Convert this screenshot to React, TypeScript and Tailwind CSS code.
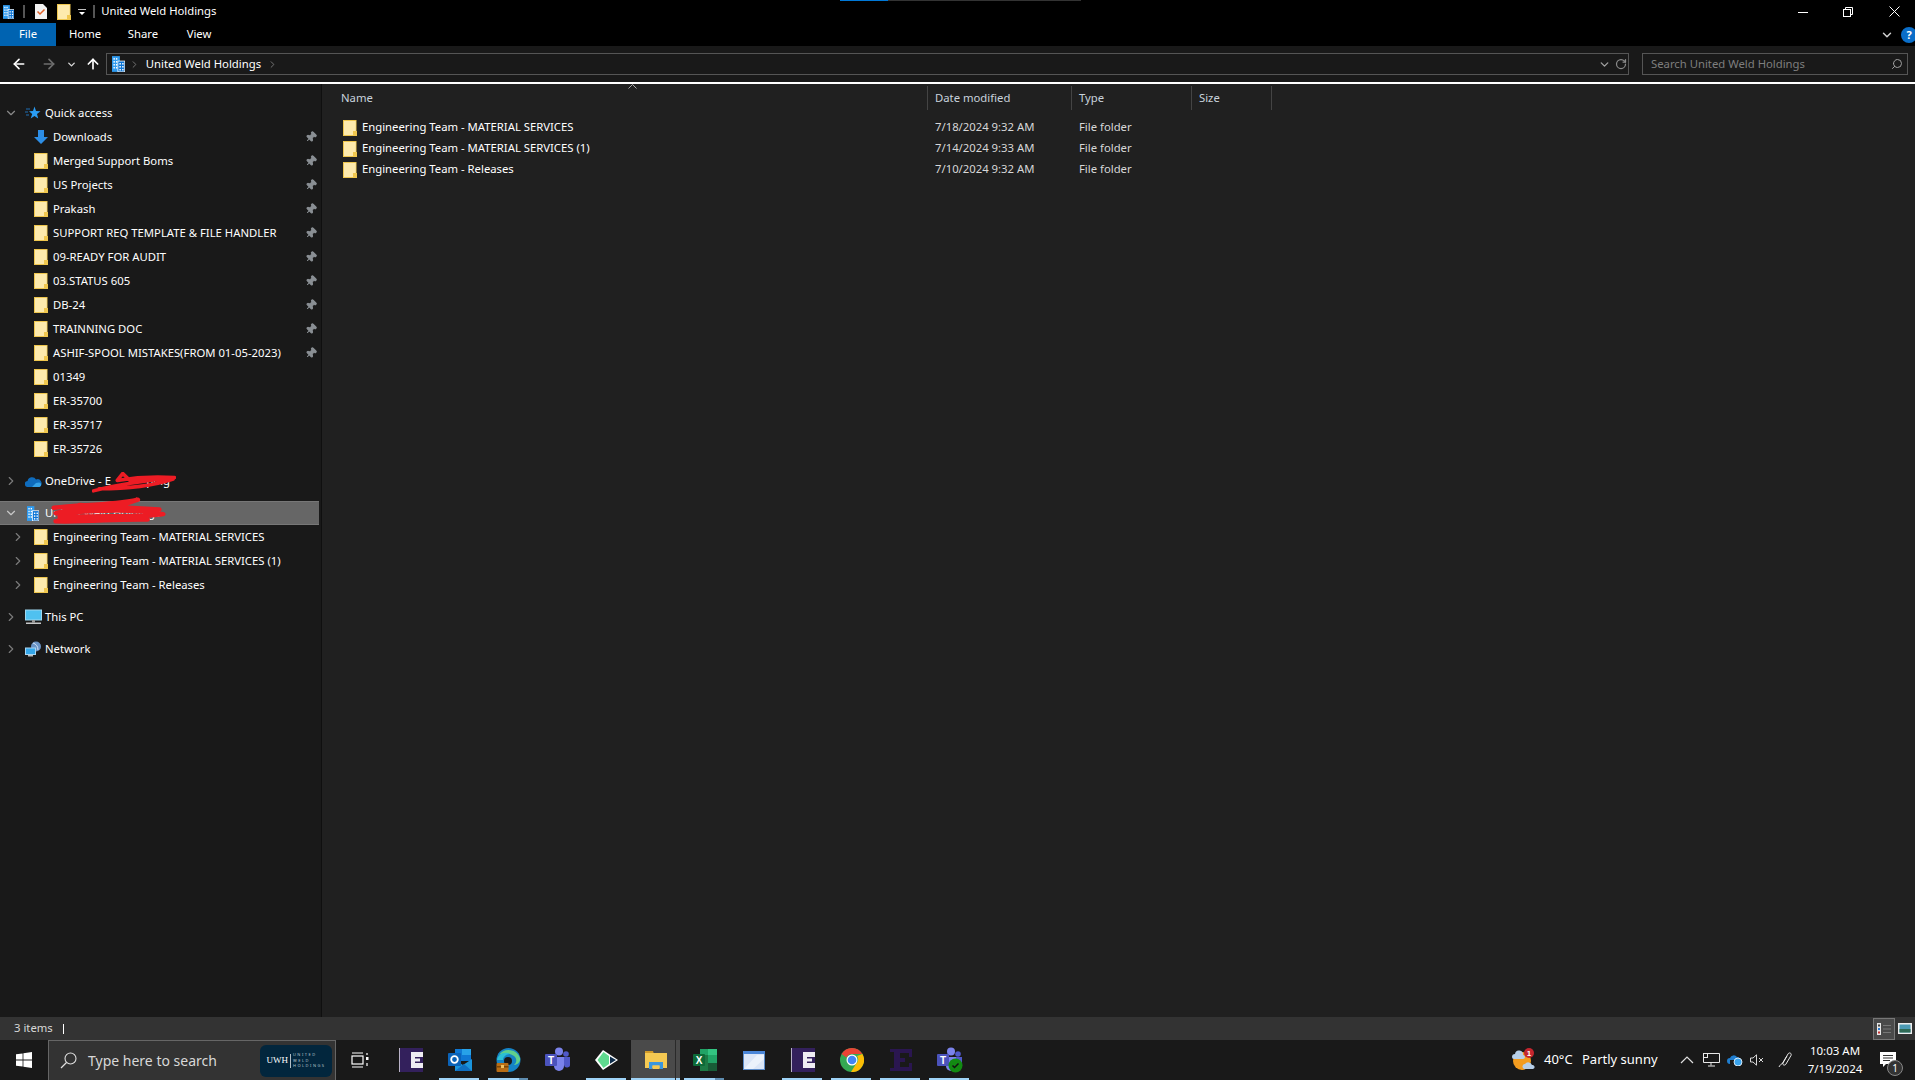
import { ChevronDown, ChevronRight, Pin, RotateCw, Search, ArrowLeft, ArrowRight, ArrowUp } from "lucide-react";

const quickAccess = [
  "Merged Support Boms",
  "US Projects",
  "Prakash",
  "SUPPORT REQ TEMPLATE & FILE HANDLER",
  "09-READY FOR AUDIT",
  "03.STATUS 605",
  "DB-24",
  "TRAINNING DOC",
  "ASHIF-SPOOL MISTAKES(FROM 01-05-2023)",
];
const recent = ["01349", "ER-35700", "ER-35717", "ER-35726"];
const children = [
  "Engineering Team - MATERIAL SERVICES",
  "Engineering Team - MATERIAL SERVICES (1)",
  "Engineering Team - Releases",
];
const files = [
  { name: "Engineering Team - MATERIAL SERVICES", date: "7/18/2024 9:32 AM" },
  { name: "Engineering Team - MATERIAL SERVICES (1)", date: "7/14/2024 9:33 AM" },
  { name: "Engineering Team - Releases", date: "7/10/2024 9:32 AM" },
];

function Folder() {
  return (
    <svg width="14" height="16" viewBox="0 0 14 16" className="shrink-0">
      <rect x="0.5" y="0.5" width="12.5" height="15" fill="#fce7a0" stroke="#eec64e" />
      <rect x="1" y="1" width="11.5" height="14" fill="#fdeaad" />
      <rect x="10" y="11" width="4" height="5" fill="#f0c74f" />
    </svg>
  );
}

function Building({ size = 16 }: { size?: number }) {
  return (
    <svg width={size * 0.8} height={size} viewBox="0 0 13 16" className="shrink-0">
      <rect x="0" y="0" width="8" height="16" fill="#2f9bf0" />
      <rect x="6" y="5" width="7" height="11" fill="#0a74d6" stroke="#fff" strokeWidth="0.8" />
      {[2, 5, 8, 11].map((y) => (
        <g key={y}>
          <rect x="1.5" y={y} width="1.4" height="1.6" fill="#fff" />
          <rect x="4" y={y} width="1.4" height="1.6" fill="#fff" />
        </g>
      ))}
      {[7, 10, 13].map((y) => (
        <g key={y}>
          <rect x="7.5" y={y} width="1.5" height="1.6" fill="#fff" />
          <rect x="10.3" y={y} width="1.5" height="1.6" fill="#fff" />
        </g>
      ))}
    </svg>
  );
}

function PinMark() {
  return <Pin size={12} fill="#8a8f94" stroke="#8a8f94" className="rotate-45 shrink-0" />;
}

function TreeRow({
  label,
  indent,
  icon,
  pinned,
  chevron,
  selected,
  children: overlay,
}: {
  label: string;
  indent: "top" | "child";
  icon: React.ReactNode;
  pinned?: boolean;
  chevron?: "down" | "right";
  selected?: boolean;
  children?: React.ReactNode;
}) {
  return (
    <div
      className={`relative flex items-center h-6 ${
        selected ? "bg-[#666666] border-y border-[#777777] mr-[2px]" : ""
      }`}
    >
      <div className={indent === "top" ? "w-[21px] flex justify-center pl-[1px]" : "w-[31px] flex justify-end pr-[6px]"}>
        {chevron === "down" && <ChevronDown size={14} strokeWidth={2} className={selected ? "text-[#c8c8c8]" : "text-[#8a8a8a]"} />}
        {chevron === "right" && <ChevronRight size={14} strokeWidth={2} className="text-[#7a7a7a]" />}
      </div>
      <div className={indent === "top" ? "w-[24px] flex justify-center" : "w-[20px] mr-[2px] flex justify-center"}>{icon}</div>
      <span className="text-white whitespace-nowrap">{label}</span>
      {pinned && (
        <span className="ml-auto mr-[4px]">
          <PinMark />
        </span>
      )}
      {overlay}
    </div>
  );
}

function Scribble({ d, className }: { d: string; className: string }) {
  return (
    <svg viewBox="0 0 120 30" preserveAspectRatio="none" className={`absolute pointer-events-none ${className}`}>
      <path d={d} fill="none" stroke="#ed1c24" strokeWidth="5" strokeLinejoin="round" strokeLinecap="round" />
    </svg>
  );
}

function SideBar() {
  return (
    <aside className="w-[322px] shrink-0 bg-[#191919] border-r border-[#0f0f0f] pt-[17px] flex flex-col">
      <TreeRow
        label="Quick access"
        indent="top"
        chevron="down"
        icon={
          <svg width="16" height="16" viewBox="0 0 16 16">
            <path d="M9.5 1.5 11 6l4.5.2-3.5 2.8 1.2 4.500-3.700-2.600-3.800 2.600L7.200 9 4 6.200 8 6z" fill="#2a9df4" />
            <path d="M1 4h4M0 7h3M1 10h3" stroke="#1f6fb5" strokeWidth="1" />
          </svg>
        }
      />
      <TreeRow
        label="Downloads"
        indent="child"
        pinned
        icon={
          <svg width="16" height="16" viewBox="0 0 16 16">
            <path d="M5 1h6v7h4l-7 7-7-7h4z" fill="#2d8ee6" />
          </svg>
        }
      />
      {quickAccess.map((q) => (
        <TreeRow key={q} label={q} indent="child" pinned icon={<Folder />} />
      ))}
      {recent.map((q) => (
        <TreeRow key={q} label={q} indent="child" icon={<Folder />} />
      ))}

      <div className="mt-2">
        <TreeRow
          label={"OneDrive - E\u00a0\u00a0\u00a0\u00a0\u00a0\u00a0\u00a0\u00a0\u00a0\u00a0\u00a0\u00a0ping"}
          indent="top"
          chevron="right"
          icon={
            <svg width="17" height="11" viewBox="0 0 17 11">
              <path d="M3 11a3 3 0 0 1-.4-6A4.500 4.500 0 0 1 11 3.500a3.500 3.500 0 0 1 3 7.500z" fill="#0f6cbd" />
              <path d="M7 11l4-4 3-.5a2.300 2.300 0 0 1 .5 4.500z" fill="#35a3e8" />
            </svg>
          }
        >
          <Scribble
            className="left-[92px] top-[3px] w-[84px] h-[21px]"
            d="M2 27 C30 20 60 14 118 8 C90 6 60 8 36 12 L44 2 L56 14 C70 10 90 4 116 10 C80 22 40 24 10 24"
          />
        </TreeRow>
      </div>
      <div className="mt-2">
        <TreeRow label="United Weld Holdings" indent="top" chevron="down" selected icon={<Building size={15} />}>
          <Scribble
            className="left-[50px] -top-[5px] w-[117px] h-[27px]"
            d="M4 12 C30 8 60 10 90 3 L60 14 C40 12 20 14 6 18 C40 16 80 12 116 19 C90 24 40 18 6 27 C40 28 70 24 100 25 M30 9 L112 14 M10 22 L90 21"
          />
        </TreeRow>
      </div>
      {children.map((c) => (
        <TreeRow key={c} label={c} indent="child" chevron="right" icon={<Folder />} />
      ))}
      <div className="mt-2">
        <TreeRow
          label="This PC"
          indent="top"
          chevron="right"
          icon={
            <svg width="17" height="16" viewBox="0 0 17 16">
              <rect x="0.500" y="1" width="16" height="10" fill="#4fc1f0" stroke="#9fd8f0" />
              <rect x="7" y="11" width="3" height="2.500" fill="#9a9a9a" />
              <rect x="1" y="13.500" width="15" height="1.500" fill="#c8c8c8" />
            </svg>
          }
        />
      </div>
      <div className="mt-2">
        <TreeRow
          label="Network"
          indent="top"
          chevron="right"
          icon={
            <svg width="17" height="16" viewBox="0 0 17 16">
              <circle cx="11" cy="5.500" r="5" fill="#6a93c4" />
              <path d="M8 2c3 1 5 3 5 7" stroke="#d5e4f5" fill="none" />
              <rect x="0.500" y="7" width="10" height="6.500" fill="#35a7ea" stroke="#a9d6f2" />
              <rect x="3" y="14" width="5" height="1.500" fill="#bbb" />
            </svg>
          }
        />
      </div>
    </aside>
  );
}

function FileList() {
  return (
    <main className="relative flex-1 bg-[#202020]">
      <span className="absolute left-[306px] top-[0px] text-[#9a9a9a]">
        <svg width="9" height="5" viewBox="0 0 9 5">
          <path d="M.5 4.500 4.500.5l4 4" stroke="#a8a8a8" fill="none" />
        </svg>
      </span>
      <div className="grid grid-cols-[606px_144px_120px_80px] h-[26px] w-[950px] pt-[2px] text-[#c8d2dc]">
        <div className="pl-[19px] border-r border-[#444] flex items-center">Name</div>
        <div className="pl-[7px] border-r border-[#444] flex items-center">Date modified</div>
        <div className="pl-[7px] border-r border-[#444] flex items-center">Type</div>
        <div className="pl-[7px] border-r border-[#444] flex items-center">Size</div>
      </div>
      <div className="mt-[7px] w-[950px]">
        {files.map((f) => (
          <div key={f.name} className="grid grid-cols-[606px_144px_120px_80px] h-[21px] items-center text-white">
            <div className="flex items-center gap-[5px] pl-[21px]">
              <Folder />
              <span className="whitespace-nowrap">{f.name}</span>
            </div>
            <div className="pl-[7px] text-[#d8d8d8]">{f.date}</div>
            <div className="pl-[7px] text-[#d8d8d8]">File folder</div>
            <div />
          </div>
        ))}
      </div>
    </main>
  );
}

function WinLogo() {
  return (
    <svg width="16" height="16" viewBox="0 0 16 16">
      <path d="M0 2.300 6.600 1.400V7.500H0zM7.400 1.300 16 0V7.500H7.400zM0 8.400H6.600V14.600L0 13.700zM7.400 8.400H16V16L7.400 14.700z" fill="#fff" />
    </svg>
  );
}

function ELogo() {
  return (
    <svg width="24" height="24" viewBox="0 0 24 24">
      <rect width="24" height="24" fill="#33205c" />
      <rect x="0" y="0" width="1" height="24" fill="#b9b2c8" />
      <path d="M12 4H24V9H16V10.500H21V13.500H16V15H24V20H12z" fill="#efedf3" />
    </svg>
  );
}

function DarkE() {
  return (
    <svg width="24" height="24" viewBox="0 0 24 24">
      <path d="M1 1H23V9H20V5H11V10H16V14H11V19H20V15H23V23H1V20H5V4H1z" fill="#2a1650" />
    </svg>
  );
}

function Outlook() {
  return (
    <svg width="24" height="24" viewBox="0 0 24 24">
      <rect x="7" y="1" width="16" height="12" fill="#0f78d4" />
      <rect x="14" y="1" width="9" height="6" fill="#27a2e8" />
      <path d="M7 12l8 5 9-6v12H7z" fill="#1a94dc" />
      <path d="M7 23l9-7 8 7z" fill="#0f6fc2" />
      <rect x="0" y="5" width="13" height="13" rx="1" fill="#0b63b8" />
      <circle cx="6.500" cy="11.500" r="3.300" fill="none" stroke="#fff" strokeWidth="1.800" />
    </svg>
  );
}

function Edge() {
  return (
    <svg width="25" height="25" viewBox="0 0 25 25">
      <circle cx="12.500" cy="12" r="12" fill="#1583c6" />
      <path d="M3 7a12 12 0 0 1 21 3c1 4-3 7-6 7 3-2 3-7 0-9-4-3-10-3-15-1z" fill="#5fd08c" />
      <path d="M1 12C2 6 9 3 14 6c-4 0-7 3-7 6z" fill="#2cc0d4" />
      <circle cx="12" cy="13" r="4" fill="#1a1a1a" />
      <rect x="0.500" y="15" width="12" height="9" rx="1" fill="#b96d15" />
      <rect x="0.500" y="18" width="12" height="1.500" fill="#7a4508" />
      <rect x="5" y="17" width="3" height="3" fill="#f0c060" />
    </svg>
  );
}

function Teams({ badge }: { badge?: boolean }) {
  return (
    <svg width="26" height="26" viewBox="0 0 26 26">
      <circle cx="14" cy="4.500" r="4" fill="#7b83eb" />
      <circle cx="21" cy="7" r="2.800" fill="#5059c9" />
      <path d="M9 10h10v9a5 5 0 0 1-10 0z" fill="#7b83eb" />
      <path d="M19 10h6v7a3 3 0 0 1-6 1z" fill="#5059c9" />
      <rect x="0" y="7" width="12" height="12" rx="1" fill="#4b53bc" />
      <text x="6" y="16.500" textAnchor="middle" fontSize="10" fontWeight="700" fill="#fff" fontFamily="'Liberation Sans', sans-serif">
        T
      </text>
      {badge && (
        <g>
          <circle cx="18.500" cy="18.500" r="7" fill="#128a12" />
          <path d="M15.500 18.500l2 2 4-4" fill="none" stroke="#111" strokeWidth="1.500" />
        </g>
      )}
    </svg>
  );
}

function Kite() {
  return (
    <svg width="25" height="22" viewBox="0 0 25 22">
      <path d="M9 1 24 11 9 21 1 11z" fill="#fff" />
      <path d="M9.500 3 15 7v8l-5.500 4L3.500 11z" fill="#5fdb8f" />
      <path d="M16 7.500 22 11l-6 3.800z" fill="#0d2c4a" />
    </svg>
  );
}

function Explorer() {
  return (
    <svg width="22" height="20" viewBox="0 0 22 20">
      <path d="M0 1h8l1 3H0z" fill="#d19a29" />
      <rect x="0" y="3" width="22" height="15" fill="#f5c952" />
      <path d="M4 19v-7h14v7h-3.500v-3.500h-7V19z" fill="#3a96dd" />
      <rect x="7.500" y="15.500" width="7" height="3.500" fill="#f5c952" />
    </svg>
  );
}

function Excel() {
  return (
    <svg width="24" height="22" viewBox="0 0 24 22">
      <rect x="7" y="0" width="17" height="22" fill="#1d7a45" />
      <rect x="15" y="0" width="9" height="6" fill="#33c481" />
      <rect x="7" y="0" width="8" height="6" fill="#21a366" />
      <rect x="15" y="6" width="9" height="8" fill="#21a366" />
      <rect x="15" y="14" width="9" height="8" fill="#185c37" />
      <rect x="0" y="5" width="12" height="12" rx="1" fill="#0d6a38" />
      <text x="6" y="15" textAnchor="middle" fontSize="10" fontWeight="700" fill="#fff" fontFamily="'Liberation Sans', sans-serif">
        X
      </text>
    </svg>
  );
}

function WindowApp() {
  return (
    <svg width="22" height="19" viewBox="0 0 22 19">
      <rect x="0.500" y="0.500" width="21" height="18" fill="#dbe6f7" stroke="#5b8bc9" />
      <rect x="0" y="0" width="22" height="3" fill="#4a86d8" />
      <path d="M1 18 14 4h7v4L10 18z" fill="#f2f6fc" opacity="0.7" />
    </svg>
  );
}

function Chrome() {
  return (
    <svg width="24" height="24" viewBox="0 0 24 24">
      <circle cx="12" cy="12" r="12" fill="#34a853" />
      <path d="M12 0a12 12 0 0 1 10.400 6H12a6 6 0 0 0-5.500 3.500L1.600 6A12 12 0 0 1 12 0z" fill="#ea4335" />
      <path d="M22.400 6A12 12 0 0 1 11 24l5.300-8.500A6 6 0 0 0 17 8z" fill="#fbbc05" />
      <circle cx="12" cy="12" r="5.500" fill="#fff" />
      <circle cx="12" cy="12" r="4.300" fill="#4285f4" />
    </svg>
  );
}

const apps = [
  { id: "e1", icon: <ELogo />, bar: "" },
  { id: "outlook", icon: <Outlook />, bar: "single" },
  { id: "edge", icon: <Edge />, bar: "stacked" },
  { id: "teams", icon: <Teams />, bar: "" },
  { id: "kite", icon: <Kite />, bar: "single" },
  { id: "explorer", icon: <Explorer />, bar: "active" },
  { id: "excel", icon: <Excel />, bar: "stacked" },
  { id: "window", icon: <WindowApp />, bar: "" },
  { id: "e2", icon: <ELogo />, bar: "single" },
  { id: "chrome", icon: <Chrome />, bar: "single" },
  { id: "e3", icon: <DarkE />, bar: "single" },
  { id: "teams2", icon: <Teams badge />, bar: "single" },
];

function TaskApp({ icon, bar }: { icon: React.ReactNode; bar: string }) {
  return (
    <div className={`relative w-[49px] h-10 flex items-center justify-center ${bar === "active" ? "bg-[#4a4a4a]" : ""}`}>
      {icon}
      {bar === "single" && <div className="absolute bottom-0 left-[4px] right-[5px] h-[2px] bg-[#9fd3f7]" />}
      {bar === "active" && (
        <>
          <div className="absolute bottom-0 left-0 right-0 h-[2px] bg-[#9fd3f7]" />
          <div className="absolute top-0 bottom-0 right-[4px] w-[1px] bg-[#2a2a2a]" />
        </>
      )}
      {bar === "stacked" && (
        <div className="absolute bottom-0 left-[4px] right-[5px] h-[2px] flex">
          <div className="flex-1 bg-[#9fd3f7]" />
          <div className="w-[9px] bg-[#5f8db0]" />
        </div>
      )}
    </div>
  );
}

function TaskBar() {
  return (
    <footer className="h-10 bg-[#191919] flex items-center text-white shrink-0">
      <div className="w-12 flex justify-center">
        <WinLogo />
      </div>
      <div className="w-[288px] h-10 bg-[#333333] border border-[#666666] border-b-0 flex items-center pl-[11px] pr-[3px]">
        <svg width="17" height="17" viewBox="0 0 17 17" className="shrink-0">
          <circle cx="10.500" cy="6.500" r="5.500" fill="none" stroke="#e0e0e0" strokeWidth="1.100" />
          <path d="M6.500 10.500 1 16" stroke="#e0e0e0" strokeWidth="1.300" />
        </svg>
        <span className="ml-[11px] text-[14px] text-[#d8d8d8] whitespace-nowrap">Type here to search</span>
        <div className="ml-auto w-[72px] h-8 rounded-md bg-[#02263d] flex items-center justify-center gap-[2px]">
          <span className="text-[9px] text-white font-['Liberation_Serif',serif]">UWH</span>
          <span className="w-[1px] h-[14px] bg-white/70" />
          <span className="text-[4px] leading-[5.500px] tracking-[1.500px] text-[#b8c4cc] whitespace-pre">
            UNITED{"\n"}WELD{"\n"}HOLDINGS
          </span>
        </div>
      </div>
      <div className="w-[50px] flex justify-center pr-[2px]">
        <svg width="18" height="16" viewBox="0 0 18 16" fill="none" stroke="#fff" strokeWidth="1.200">
          <rect x="1" y="4" width="11" height="8" />
          <path d="M1 1h11M1 15h11" />
          <rect x="15" y="5" width="2.500" height="3" fill="#fff" stroke="none" />
          <path d="M16 1v2M16 11v3" />
        </svg>
      </div>
      {apps.map((a) => (
        <TaskApp key={a.id} icon={a.icon} bar={a.bar} />
      ))}
      <div className="ml-auto flex items-center">
        <svg width="24" height="24" viewBox="0 0 24 24" className="mr-[9px]">
          <circle cx="11" cy="13" r="9" fill="#f39c1f" />
          <path d="M1 9a3 3 0 0 1 3-3 4 4 0 0 1 8 1 2 2 0 0 1 0 4H3a2 2 0 0 1-2-2z" fill="#b7cfe8" />
          <path d="M12 20a2.500 2.500 0 0 1 2-4 4 4 0 0 1 7 1 2 2 0 0 1 1 4H13z" fill="#b7cfe8" />
          <circle cx="18" cy="5" r="5" fill="#c4262e" />
          <text x="18" y="8" textAnchor="middle" fontSize="8" fontWeight="700" fill="#fff" fontFamily="'Liberation Sans', sans-serif">
            1
          </text>
        </svg>
        <span className="text-[13px] w-[29px] whitespace-nowrap">40°C</span>
        <span className="ml-[9px] text-[13px] w-[75px] whitespace-nowrap">Partly sunny</span>
        <svg width="14" height="8" viewBox="0 0 14 8" className="ml-[23px]" fill="none" stroke="#e0e0e0" strokeWidth="1.200">
          <path d="M1 7l6-6 6 6" />
        </svg>
        <svg width="17" height="14" viewBox="0 0 17 14" className="ml-[9px]" fill="none" stroke="#e8e8e8" strokeWidth="1">
          <path d="M4.500.5h12v9H.5V5M8 9.500v3M5 13h7" />
          <rect x=".5" y=".5" width="4" height="4" />
        </svg>
        <svg width="16" height="11" viewBox="0 0 16 11" className="ml-[7px]">
          <path d="M3 9a3 3 0 0 1 0-6 4 4 0 0 1 7-1 3 3 0 0 1 3 3H3z" fill="#1f7ed0" />
          <circle cx="11" cy="7" r="4" fill="#3aa3ec" stroke="#fff" strokeWidth="0.800" />
        </svg>
        <svg width="14" height="12" viewBox="0 0 14 12" className="ml-[7px]" fill="none" stroke="#d8d8d8" strokeWidth="1">
          <path d="M.5 4h2.500L6.500.8v10.400L3 8H.5zM9 4l4 4M13 4l-4 4" />
        </svg>
        <svg width="16" height="16" viewBox="0 0 16 16" className="ml-[14px]" fill="none" stroke="#e8e8e8" strokeWidth="1">
          <path d="M4 12 10 2c1-2 4-1 3 1.500L8 12c-1 2-4 1-3-1l4-7M1 15c1-2 2-3 3-3" />
        </svg>
        <div className="ml-[14px] w-[54px] flex flex-col items-center text-[11.5px] leading-[18px] text-white">
          <span>10:03 AM</span>
          <span>7/19/2024</span>
        </div>
        <div className="relative ml-[1px] w-[52px] h-10 flex items-center justify-center">
          <svg width="16" height="16" viewBox="0 0 16 16" className="-ml-[2px]">
            <path d="M0 0h16v12H6l-3 3v-3H0z" fill="#fff" />
            <path d="M3 3.500h10M3 6h10M3 8.500h7" stroke="#333" />
          </svg>
          <span className="absolute left-[24px] top-[20px] w-[16px] h-[16px] rounded-full bg-[#333] border border-[#888] text-[10px] leading-[14px] text-center">
            1
          </span>
        </div>
      </div>
    </footer>
  );
}

export default function App() {
  return (
    <div className="h-screen w-full flex flex-col bg-black overflow-hidden font-['Noto_Sans',sans-serif] text-[11.3px]">
      {/* title bar */}
      <div className="relative h-[23px] shrink-0 flex items-center text-white">
        <div className="absolute top-0 left-[840px] w-[241px] h-[1px] bg-[#333333]">
          <div className="w-[48px] h-[1px] bg-[#0078d7]" />
        </div>
        <div className="ml-[3px]">
          <Building size={14} />
        </div>
        <div className="ml-[9px] w-[2px] h-[13px] bg-[#555]" />
        <svg width="12" height="15" viewBox="0 0 12 15" className="ml-[10px]">
          <path d="M0 0h8l4 4v11H0z" fill="#f2f2f2" />
          <path d="M2.500 7.500 5 10l4.500-4.500" fill="none" stroke="#e2622a" strokeWidth="1.500" />
        </svg>
        <div className="ml-[10px]">
          <Folder />
        </div>
        <svg width="8" height="8" viewBox="0 0 8 8" className="ml-[7px]">
          <path d="M0 1h8v.8H0zM1 4h6L4 7z" fill="#fff" />
        </svg>
        <div className="ml-[7px] w-[2px] h-[13px] bg-[#555]" />
        <span className="ml-[6px]">United Weld Holdings</span>
        <div className="ml-auto flex items-center text-white">
          <svg width="10" height="10" viewBox="0 0 10 10" stroke="#fff" className="mr-[35px]">
            <path d="M0 5.500h10" />
          </svg>
          <svg width="10" height="10" viewBox="0 0 10 10" fill="none" stroke="#fff" className="mr-[36px]">
            <rect x=".5" y="2.500" width="7" height="7" />
            <path d="M2.500 2.500v-2h7v7h-2" />
          </svg>
          <svg width="11" height="11" viewBox="0 0 11 11" fill="none" stroke="#fff" className="mr-[15px]">
            <path d="M.5.5l10 10M10.500.5l-10 10" />
          </svg>
        </div>
      </div>

      {/* ribbon tabs */}
      <div className="h-[23px] shrink-0 flex items-center text-white">
        <div className="w-[56px] h-full bg-[#0063b1] flex items-center justify-center">File</div>
        <div className="w-[58px] text-center">Home</div>
        <div className="w-[58px] text-center">Share</div>
        <div className="w-[54px] text-center">View</div>
        <div className="ml-auto flex items-center">
          <ChevronDown size={14} strokeWidth={2.500} className="text-[#d0d0d0] mr-[7px]" />
          <div className="w-[14px] h-[16px] overflow-hidden">
            <div className="w-[16px] h-[16px] rounded-full bg-[#0a6ec9] text-white text-[11px] leading-[16px] text-center font-bold">?</div>
          </div>
        </div>
      </div>

      {/* address bar */}
      <div className="h-[36px] shrink-0 bg-[#191919] flex items-center">
        <div className="w-[106px] shrink-0 flex items-center pl-[11px]">
          <ArrowLeft size={16} strokeWidth={2.500} className="text-white" />
          <ArrowRight size={16} strokeWidth={2.500} className="text-[#6e6e6e] ml-[14px]" />
          <ChevronDown size={11} strokeWidth={3} className="text-[#d8d8d8] ml-[9px]" />
          <ArrowUp size={16} strokeWidth={2.500} className="text-white ml-[8px]" />
        </div>
        <div className="w-[524px] flex-1 h-[22px] border border-[#555555] flex items-center pl-[5px] text-white">
          <Building size={16} />
          <ChevronRight size={11} strokeWidth={2} className="text-[#7a7a7a] ml-[4px]" />
          <span className="ml-[6px]">United Weld Holdings</span>
          <ChevronRight size={11} strokeWidth={2} className="text-[#7a7a7a] ml-[6px]" />
          <ChevronDown size={13} strokeWidth={2.500} className="text-[#a0a0a0] ml-auto" />
          <RotateCw size={12} strokeWidth={2.500} className="text-[#8a8a8a] ml-[4px] mr-[1px]" />
        </div>
        <div className="w-[266px] h-[22px] ml-[13px] mr-[7px] border border-[#555555] flex items-center pl-[8px] pr-[4px] text-[#7e7e7e]">
          <span>Search United Weld Holdings</span>
          <Search size={12} strokeWidth={2} className="ml-auto -scale-x-100 text-[#a0a0a0]" />
        </div>
      </div>

      <div className="h-[2px] bg-white shrink-0" />

      {/* panes */}
      <div className="flex-1 flex min-h-0">
        <SideBar />
        <FileList />
      </div>

      {/* status bar */}
      <div className="h-[23px] shrink-0 bg-[#333333] flex items-center text-[#d8d8d8]">
        <span className="ml-[14px]">3 items</span>
        <span className="ml-[10px] w-[1px] h-[10px] bg-white" />
        <div className="ml-auto flex items-center mr-[3px]">
          <div className="w-[22px] h-[22px] bg-[#4a4a4a] border border-[#777] flex items-center justify-center">
            <svg width="14" height="12" viewBox="0 0 14 12">
              <rect x="0" y="0" width="4" height="12" fill="#e8e8e8" />
              <rect x="1" y="1.500" width="2" height="2" fill="#444" />
              <rect x="1" y="5" width="2" height="2" fill="#2a7bd0" />
              <rect x="1" y="8.500" width="2" height="2" fill="#c63030" />
              <path d="M6 2.500h8M6 6h8M6 9.500h8" stroke="#777" />
            </svg>
          </div>
          <svg width="14" height="11" viewBox="0 0 14 11" className="ml-[3px]">
            <rect width="14" height="11" fill="#eee" />
            <rect x="1.500" y="1.500" width="11" height="8" fill="#4c9bb5" />
            <rect x="1.500" y="6" width="11" height="3.500" fill="#2f6a55" />
          </svg>
        </div>
      </div>

      <TaskBar />
    </div>
  );
}
